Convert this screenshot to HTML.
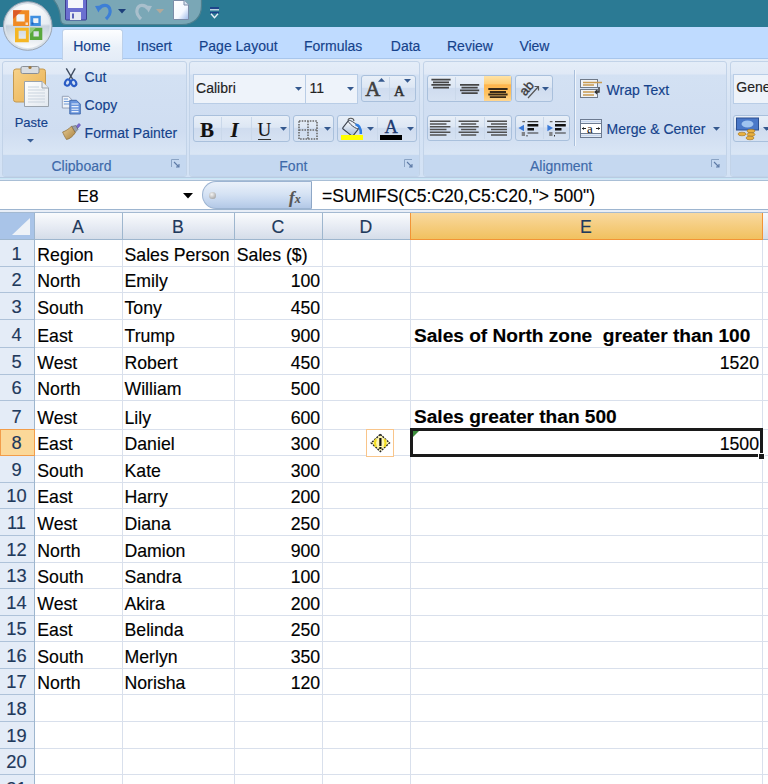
<!DOCTYPE html><html><head><meta charset="utf-8"><style>
html,body{margin:0;padding:0;width:768px;height:784px;overflow:hidden;background:#fff;position:relative;font-family:"Liberation Sans",sans-serif;}
.t{position:absolute;white-space:nowrap;-webkit-text-stroke:0.15px currentColor;}
svg{position:absolute;overflow:visible}
</style></head><body>
<div style="position:absolute;left:34px;top:266px;width:734px;height:1px;background:#d9e0ec"></div>
<div style="position:absolute;left:34px;top:292px;width:734px;height:1px;background:#d9e0ec"></div>
<div style="position:absolute;left:34px;top:319px;width:734px;height:1px;background:#d9e0ec"></div>
<div style="position:absolute;left:34px;top:347px;width:734px;height:1px;background:#d9e0ec"></div>
<div style="position:absolute;left:34px;top:374px;width:734px;height:1px;background:#d9e0ec"></div>
<div style="position:absolute;left:34px;top:400px;width:734px;height:1px;background:#d9e0ec"></div>
<div style="position:absolute;left:34px;top:429px;width:734px;height:1px;background:#d9e0ec"></div>
<div style="position:absolute;left:34px;top:455px;width:734px;height:1px;background:#d9e0ec"></div>
<div style="position:absolute;left:34px;top:482px;width:734px;height:1px;background:#d9e0ec"></div>
<div style="position:absolute;left:34px;top:508px;width:734px;height:1px;background:#d9e0ec"></div>
<div style="position:absolute;left:34px;top:535px;width:734px;height:1px;background:#d9e0ec"></div>
<div style="position:absolute;left:34px;top:562px;width:734px;height:1px;background:#d9e0ec"></div>
<div style="position:absolute;left:34px;top:588px;width:734px;height:1px;background:#d9e0ec"></div>
<div style="position:absolute;left:34px;top:615px;width:734px;height:1px;background:#d9e0ec"></div>
<div style="position:absolute;left:34px;top:641px;width:734px;height:1px;background:#d9e0ec"></div>
<div style="position:absolute;left:34px;top:668px;width:734px;height:1px;background:#d9e0ec"></div>
<div style="position:absolute;left:34px;top:694px;width:734px;height:1px;background:#d9e0ec"></div>
<div style="position:absolute;left:34px;top:721px;width:734px;height:1px;background:#d9e0ec"></div>
<div style="position:absolute;left:34px;top:748px;width:734px;height:1px;background:#d9e0ec"></div>
<div style="position:absolute;left:34px;top:774px;width:734px;height:1px;background:#d9e0ec"></div>
<div style="position:absolute;left:34px;top:801px;width:734px;height:1px;background:#d9e0ec"></div>
<div style="position:absolute;left:122px;top:239px;width:1px;height:545px;background:#d9e0ec"></div>
<div style="position:absolute;left:234px;top:239px;width:1px;height:545px;background:#d9e0ec"></div>
<div style="position:absolute;left:322px;top:239px;width:1px;height:545px;background:#d9e0ec"></div>
<div style="position:absolute;left:410px;top:239px;width:1px;height:545px;background:#d9e0ec"></div>
<div style="position:absolute;left:762px;top:239px;width:1px;height:545px;background:#d9e0ec"></div>
<div style="position:absolute;left:0px;top:239px;width:34px;height:545px;background:#e4ecf7"></div>
<div style="position:absolute;left:0px;top:266px;width:34px;height:1px;background:#aec2d9"></div>
<div style="position:absolute;left:0px;top:292px;width:34px;height:1px;background:#aec2d9"></div>
<div style="position:absolute;left:0px;top:319px;width:34px;height:1px;background:#aec2d9"></div>
<div style="position:absolute;left:0px;top:347px;width:34px;height:1px;background:#aec2d9"></div>
<div style="position:absolute;left:0px;top:374px;width:34px;height:1px;background:#aec2d9"></div>
<div style="position:absolute;left:0px;top:400px;width:34px;height:1px;background:#aec2d9"></div>
<div style="position:absolute;left:0px;top:429px;width:34px;height:1px;background:#aec2d9"></div>
<div style="position:absolute;left:0px;top:455px;width:34px;height:1px;background:#aec2d9"></div>
<div style="position:absolute;left:0px;top:482px;width:34px;height:1px;background:#aec2d9"></div>
<div style="position:absolute;left:0px;top:508px;width:34px;height:1px;background:#aec2d9"></div>
<div style="position:absolute;left:0px;top:535px;width:34px;height:1px;background:#aec2d9"></div>
<div style="position:absolute;left:0px;top:562px;width:34px;height:1px;background:#aec2d9"></div>
<div style="position:absolute;left:0px;top:588px;width:34px;height:1px;background:#aec2d9"></div>
<div style="position:absolute;left:0px;top:615px;width:34px;height:1px;background:#aec2d9"></div>
<div style="position:absolute;left:0px;top:641px;width:34px;height:1px;background:#aec2d9"></div>
<div style="position:absolute;left:0px;top:668px;width:34px;height:1px;background:#aec2d9"></div>
<div style="position:absolute;left:0px;top:694px;width:34px;height:1px;background:#aec2d9"></div>
<div style="position:absolute;left:0px;top:721px;width:34px;height:1px;background:#aec2d9"></div>
<div style="position:absolute;left:0px;top:748px;width:34px;height:1px;background:#aec2d9"></div>
<div style="position:absolute;left:0px;top:774px;width:34px;height:1px;background:#aec2d9"></div>
<div style="position:absolute;left:0px;top:801px;width:34px;height:1px;background:#aec2d9"></div>
<div style="position:absolute;left:34px;top:239px;width:1px;height:545px;background:#9eb6ce"></div>
<div style="position:absolute;left:0px;top:429px;width:35px;height:27px;background:#fbd899;box-sizing:border-box;border:1px solid #f29d4a;"></div>
<div style="position:absolute;left:0px;top:213px;width:768px;height:26px;background:linear-gradient(#f9fbfd,#e4e9f2 60%,#d5dde9);"></div>
<div style="position:absolute;left:0px;top:212px;width:768px;height:1px;background:#9eb6ce"></div>
<div style="position:absolute;left:0px;top:239px;width:768px;height:1px;background:#9eb6ce"></div>
<div style="position:absolute;left:34px;top:213px;width:1px;height:26px;background:#9eb6ce"></div>
<div style="position:absolute;left:122px;top:213px;width:1px;height:26px;background:#9eb6ce"></div>
<div style="position:absolute;left:234px;top:213px;width:1px;height:26px;background:#9eb6ce"></div>
<div style="position:absolute;left:322px;top:213px;width:1px;height:26px;background:#9eb6ce"></div>
<div style="position:absolute;left:410px;top:213px;width:1px;height:26px;background:#9eb6ce"></div>
<div style="position:absolute;left:762px;top:213px;width:1px;height:26px;background:#9eb6ce"></div>
<div style="position:absolute;left:0px;top:213px;width:34px;height:26px;background:#a9c4e8"></div>
<svg style="left:0;top:213px" width="34" height="26"><polygon points="12,22 30,22 30,5" fill="#eef2f7"/></svg>
<div style="position:absolute;left:410px;top:213px;width:353px;height:27px;box-sizing:border-box;background:linear-gradient(#f9d99f,#f1c15f);border:1px solid #f29436;border-top:none;"></div>
<div class="t" style="left:48.0px;width:60px;text-align:center;top:215.77px;line-height:22px;font-size:17.7px;font-weight:normal;color:#1f3a5c;font-family:'Liberation Sans', sans-serif;">A</div>
<div class="t" style="left:148.0px;width:60px;text-align:center;top:215.77px;line-height:22px;font-size:17.7px;font-weight:normal;color:#1f3a5c;font-family:'Liberation Sans', sans-serif;">B</div>
<div class="t" style="left:248.0px;width:60px;text-align:center;top:215.77px;line-height:22px;font-size:17.7px;font-weight:normal;color:#1f3a5c;font-family:'Liberation Sans', sans-serif;">C</div>
<div class="t" style="left:336.0px;width:60px;text-align:center;top:215.77px;line-height:22px;font-size:17.7px;font-weight:normal;color:#1f3a5c;font-family:'Liberation Sans', sans-serif;">D</div>
<div class="t" style="left:556.0px;width:60px;text-align:center;top:215.77px;line-height:22px;font-size:17.7px;font-weight:normal;color:#1f3a5c;font-family:'Liberation Sans', sans-serif;">E</div>
<div class="t" style="left:-0.5px;width:34px;text-align:center;top:241.86px;line-height:23px;font-size:18.3px;font-weight:normal;color:#1f3a5c;font-family:'Liberation Sans', sans-serif;">1</div>
<div class="t" style="left:-0.5px;width:34px;text-align:center;top:267.86px;line-height:23px;font-size:18.3px;font-weight:normal;color:#1f3a5c;font-family:'Liberation Sans', sans-serif;">2</div>
<div class="t" style="left:-0.5px;width:34px;text-align:center;top:294.86px;line-height:23px;font-size:18.3px;font-weight:normal;color:#1f3a5c;font-family:'Liberation Sans', sans-serif;">3</div>
<div class="t" style="left:-0.5px;width:34px;text-align:center;top:322.86px;line-height:23px;font-size:18.3px;font-weight:normal;color:#1f3a5c;font-family:'Liberation Sans', sans-serif;">4</div>
<div class="t" style="left:-0.5px;width:34px;text-align:center;top:349.86px;line-height:23px;font-size:18.3px;font-weight:normal;color:#1f3a5c;font-family:'Liberation Sans', sans-serif;">5</div>
<div class="t" style="left:-0.5px;width:34px;text-align:center;top:375.86px;line-height:23px;font-size:18.3px;font-weight:normal;color:#1f3a5c;font-family:'Liberation Sans', sans-serif;">6</div>
<div class="t" style="left:-0.5px;width:34px;text-align:center;top:404.86px;line-height:23px;font-size:18.3px;font-weight:normal;color:#1f3a5c;font-family:'Liberation Sans', sans-serif;">7</div>
<div class="t" style="left:-0.5px;width:34px;text-align:center;top:430.86px;line-height:23px;font-size:18.3px;font-weight:normal;color:#1f3a5c;font-family:'Liberation Sans', sans-serif;">8</div>
<div class="t" style="left:-0.5px;width:34px;text-align:center;top:457.86px;line-height:23px;font-size:18.3px;font-weight:normal;color:#1f3a5c;font-family:'Liberation Sans', sans-serif;">9</div>
<div class="t" style="left:-0.5px;width:34px;text-align:center;top:483.86px;line-height:23px;font-size:18.3px;font-weight:normal;color:#1f3a5c;font-family:'Liberation Sans', sans-serif;">10</div>
<div class="t" style="left:-0.5px;width:34px;text-align:center;top:510.86px;line-height:23px;font-size:18.3px;font-weight:normal;color:#1f3a5c;font-family:'Liberation Sans', sans-serif;">11</div>
<div class="t" style="left:-0.5px;width:34px;text-align:center;top:537.86px;line-height:23px;font-size:18.3px;font-weight:normal;color:#1f3a5c;font-family:'Liberation Sans', sans-serif;">12</div>
<div class="t" style="left:-0.5px;width:34px;text-align:center;top:563.86px;line-height:23px;font-size:18.3px;font-weight:normal;color:#1f3a5c;font-family:'Liberation Sans', sans-serif;">13</div>
<div class="t" style="left:-0.5px;width:34px;text-align:center;top:590.86px;line-height:23px;font-size:18.3px;font-weight:normal;color:#1f3a5c;font-family:'Liberation Sans', sans-serif;">14</div>
<div class="t" style="left:-0.5px;width:34px;text-align:center;top:616.86px;line-height:23px;font-size:18.3px;font-weight:normal;color:#1f3a5c;font-family:'Liberation Sans', sans-serif;">15</div>
<div class="t" style="left:-0.5px;width:34px;text-align:center;top:643.86px;line-height:23px;font-size:18.3px;font-weight:normal;color:#1f3a5c;font-family:'Liberation Sans', sans-serif;">16</div>
<div class="t" style="left:-0.5px;width:34px;text-align:center;top:669.86px;line-height:23px;font-size:18.3px;font-weight:normal;color:#1f3a5c;font-family:'Liberation Sans', sans-serif;">17</div>
<div class="t" style="left:-0.5px;width:34px;text-align:center;top:696.86px;line-height:23px;font-size:18.3px;font-weight:normal;color:#1f3a5c;font-family:'Liberation Sans', sans-serif;">18</div>
<div class="t" style="left:-0.5px;width:34px;text-align:center;top:723.86px;line-height:23px;font-size:18.3px;font-weight:normal;color:#1f3a5c;font-family:'Liberation Sans', sans-serif;">19</div>
<div class="t" style="left:-0.5px;width:34px;text-align:center;top:749.86px;line-height:23px;font-size:18.3px;font-weight:normal;color:#1f3a5c;font-family:'Liberation Sans', sans-serif;">20</div>
<div class="t" style="left:-0.5px;width:34px;text-align:center;top:776.86px;line-height:23px;font-size:18.3px;font-weight:normal;color:#1f3a5c;font-family:'Liberation Sans', sans-serif;">21</div>
<div class="t" style="left:37.3px;top:243.87px;line-height:22px;font-size:17.7px;font-weight:normal;color:#000;font-family:'Liberation Sans', sans-serif;">Region</div>
<div class="t" style="left:124.5px;top:243.87px;line-height:22px;font-size:17.7px;font-weight:normal;color:#000;font-family:'Liberation Sans', sans-serif;">Sales Person</div>
<div class="t" style="left:236.8px;top:243.87px;line-height:22px;font-size:17.7px;font-weight:normal;color:#000;font-family:'Liberation Sans', sans-serif;">Sales ($)</div>
<div class="t" style="left:37.3px;top:269.87px;line-height:22px;font-size:17.7px;font-weight:normal;color:#000;font-family:'Liberation Sans', sans-serif;">North</div>
<div class="t" style="left:124.5px;top:269.87px;line-height:22px;font-size:17.7px;font-weight:normal;color:#000;font-family:'Liberation Sans', sans-serif;">Emily</div>
<div class="t" style="right:447.8px;top:269.87px;line-height:22px;font-size:17.7px;font-weight:normal;color:#000;font-family:'Liberation Sans', sans-serif;">100</div>
<div class="t" style="left:37.3px;top:296.87px;line-height:22px;font-size:17.7px;font-weight:normal;color:#000;font-family:'Liberation Sans', sans-serif;">South</div>
<div class="t" style="left:124.5px;top:296.87px;line-height:22px;font-size:17.7px;font-weight:normal;color:#000;font-family:'Liberation Sans', sans-serif;">Tony</div>
<div class="t" style="right:447.8px;top:296.87px;line-height:22px;font-size:17.7px;font-weight:normal;color:#000;font-family:'Liberation Sans', sans-serif;">450</div>
<div class="t" style="left:37.3px;top:324.87px;line-height:22px;font-size:17.7px;font-weight:normal;color:#000;font-family:'Liberation Sans', sans-serif;">East</div>
<div class="t" style="left:124.5px;top:324.87px;line-height:22px;font-size:17.7px;font-weight:normal;color:#000;font-family:'Liberation Sans', sans-serif;">Trump</div>
<div class="t" style="right:447.8px;top:324.87px;line-height:22px;font-size:17.7px;font-weight:normal;color:#000;font-family:'Liberation Sans', sans-serif;">900</div>
<div class="t" style="left:37.3px;top:351.87px;line-height:22px;font-size:17.7px;font-weight:normal;color:#000;font-family:'Liberation Sans', sans-serif;">West</div>
<div class="t" style="left:124.5px;top:351.87px;line-height:22px;font-size:17.7px;font-weight:normal;color:#000;font-family:'Liberation Sans', sans-serif;">Robert</div>
<div class="t" style="right:447.8px;top:351.87px;line-height:22px;font-size:17.7px;font-weight:normal;color:#000;font-family:'Liberation Sans', sans-serif;">450</div>
<div class="t" style="left:37.3px;top:377.87px;line-height:22px;font-size:17.7px;font-weight:normal;color:#000;font-family:'Liberation Sans', sans-serif;">North</div>
<div class="t" style="left:124.5px;top:377.87px;line-height:22px;font-size:17.7px;font-weight:normal;color:#000;font-family:'Liberation Sans', sans-serif;">William</div>
<div class="t" style="right:447.8px;top:377.87px;line-height:22px;font-size:17.7px;font-weight:normal;color:#000;font-family:'Liberation Sans', sans-serif;">500</div>
<div class="t" style="left:37.3px;top:406.87px;line-height:22px;font-size:17.7px;font-weight:normal;color:#000;font-family:'Liberation Sans', sans-serif;">West</div>
<div class="t" style="left:124.5px;top:406.87px;line-height:22px;font-size:17.7px;font-weight:normal;color:#000;font-family:'Liberation Sans', sans-serif;">Lily</div>
<div class="t" style="right:447.8px;top:406.87px;line-height:22px;font-size:17.7px;font-weight:normal;color:#000;font-family:'Liberation Sans', sans-serif;">600</div>
<div class="t" style="left:37.3px;top:432.87px;line-height:22px;font-size:17.7px;font-weight:normal;color:#000;font-family:'Liberation Sans', sans-serif;">East</div>
<div class="t" style="left:124.5px;top:432.87px;line-height:22px;font-size:17.7px;font-weight:normal;color:#000;font-family:'Liberation Sans', sans-serif;">Daniel</div>
<div class="t" style="right:447.8px;top:432.87px;line-height:22px;font-size:17.7px;font-weight:normal;color:#000;font-family:'Liberation Sans', sans-serif;">300</div>
<div class="t" style="left:37.3px;top:459.87px;line-height:22px;font-size:17.7px;font-weight:normal;color:#000;font-family:'Liberation Sans', sans-serif;">South</div>
<div class="t" style="left:124.5px;top:459.87px;line-height:22px;font-size:17.7px;font-weight:normal;color:#000;font-family:'Liberation Sans', sans-serif;">Kate</div>
<div class="t" style="right:447.8px;top:459.87px;line-height:22px;font-size:17.7px;font-weight:normal;color:#000;font-family:'Liberation Sans', sans-serif;">300</div>
<div class="t" style="left:37.3px;top:485.87px;line-height:22px;font-size:17.7px;font-weight:normal;color:#000;font-family:'Liberation Sans', sans-serif;">East</div>
<div class="t" style="left:124.5px;top:485.87px;line-height:22px;font-size:17.7px;font-weight:normal;color:#000;font-family:'Liberation Sans', sans-serif;">Harry</div>
<div class="t" style="right:447.8px;top:485.87px;line-height:22px;font-size:17.7px;font-weight:normal;color:#000;font-family:'Liberation Sans', sans-serif;">200</div>
<div class="t" style="left:37.3px;top:512.87px;line-height:22px;font-size:17.7px;font-weight:normal;color:#000;font-family:'Liberation Sans', sans-serif;">West</div>
<div class="t" style="left:124.5px;top:512.87px;line-height:22px;font-size:17.7px;font-weight:normal;color:#000;font-family:'Liberation Sans', sans-serif;">Diana</div>
<div class="t" style="right:447.8px;top:512.87px;line-height:22px;font-size:17.7px;font-weight:normal;color:#000;font-family:'Liberation Sans', sans-serif;">250</div>
<div class="t" style="left:37.3px;top:539.87px;line-height:22px;font-size:17.7px;font-weight:normal;color:#000;font-family:'Liberation Sans', sans-serif;">North</div>
<div class="t" style="left:124.5px;top:539.87px;line-height:22px;font-size:17.7px;font-weight:normal;color:#000;font-family:'Liberation Sans', sans-serif;">Damion</div>
<div class="t" style="right:447.8px;top:539.87px;line-height:22px;font-size:17.7px;font-weight:normal;color:#000;font-family:'Liberation Sans', sans-serif;">900</div>
<div class="t" style="left:37.3px;top:565.87px;line-height:22px;font-size:17.7px;font-weight:normal;color:#000;font-family:'Liberation Sans', sans-serif;">South</div>
<div class="t" style="left:124.5px;top:565.87px;line-height:22px;font-size:17.7px;font-weight:normal;color:#000;font-family:'Liberation Sans', sans-serif;">Sandra</div>
<div class="t" style="right:447.8px;top:565.87px;line-height:22px;font-size:17.7px;font-weight:normal;color:#000;font-family:'Liberation Sans', sans-serif;">100</div>
<div class="t" style="left:37.3px;top:592.87px;line-height:22px;font-size:17.7px;font-weight:normal;color:#000;font-family:'Liberation Sans', sans-serif;">West</div>
<div class="t" style="left:124.5px;top:592.87px;line-height:22px;font-size:17.7px;font-weight:normal;color:#000;font-family:'Liberation Sans', sans-serif;">Akira</div>
<div class="t" style="right:447.8px;top:592.87px;line-height:22px;font-size:17.7px;font-weight:normal;color:#000;font-family:'Liberation Sans', sans-serif;">200</div>
<div class="t" style="left:37.3px;top:618.87px;line-height:22px;font-size:17.7px;font-weight:normal;color:#000;font-family:'Liberation Sans', sans-serif;">East</div>
<div class="t" style="left:124.5px;top:618.87px;line-height:22px;font-size:17.7px;font-weight:normal;color:#000;font-family:'Liberation Sans', sans-serif;">Belinda</div>
<div class="t" style="right:447.8px;top:618.87px;line-height:22px;font-size:17.7px;font-weight:normal;color:#000;font-family:'Liberation Sans', sans-serif;">250</div>
<div class="t" style="left:37.3px;top:645.87px;line-height:22px;font-size:17.7px;font-weight:normal;color:#000;font-family:'Liberation Sans', sans-serif;">South</div>
<div class="t" style="left:124.5px;top:645.87px;line-height:22px;font-size:17.7px;font-weight:normal;color:#000;font-family:'Liberation Sans', sans-serif;">Merlyn</div>
<div class="t" style="right:447.8px;top:645.87px;line-height:22px;font-size:17.7px;font-weight:normal;color:#000;font-family:'Liberation Sans', sans-serif;">350</div>
<div class="t" style="left:37.3px;top:671.87px;line-height:22px;font-size:17.7px;font-weight:normal;color:#000;font-family:'Liberation Sans', sans-serif;">North</div>
<div class="t" style="left:124.5px;top:671.87px;line-height:22px;font-size:17.7px;font-weight:normal;color:#000;font-family:'Liberation Sans', sans-serif;">Norisha</div>
<div class="t" style="right:447.8px;top:671.87px;line-height:22px;font-size:17.7px;font-weight:normal;color:#000;font-family:'Liberation Sans', sans-serif;">120</div>
<div class="t" style="left:414px;top:323.78px;line-height:24px;font-size:19.1px;font-weight:bold;color:#000;font-family:'Liberation Sans', sans-serif;">Sales of North zone&nbsp; greater than 100</div>
<div class="t" style="right:9px;top:351.67px;line-height:22px;font-size:17.7px;font-weight:normal;color:#000;font-family:'Liberation Sans', sans-serif;">1520</div>
<div class="t" style="left:414px;top:405.38px;line-height:24px;font-size:19.1px;font-weight:bold;color:#000;font-family:'Liberation Sans', sans-serif;">Sales greater than 500</div>
<div class="t" style="right:9px;top:432.67px;line-height:22px;font-size:17.7px;font-weight:normal;color:#000;font-family:'Liberation Sans', sans-serif;">1500</div>
<div style="position:absolute;left:410px;top:428px;width:353px;height:29px;box-sizing:border-box;border:3px solid #1a1a1a;"></div>
<div style="position:absolute;left:759px;top:454px;width:5px;height:5px;background:#1a1a1a;border:1px solid #fff;box-sizing:content-box;margin:-1px"></div>
<svg style="left:413px;top:431px" width="8" height="8"><polygon points="0,0 6,0 0,6" fill="#3c8c3c"/></svg>
<div style="position:absolute;left:366px;top:429px;width:28px;height:28px;box-sizing:border-box;border:1px solid #f9c58a;background:#fff"></div>
<svg style="left:370px;top:433px" width="21" height="20" viewBox="0 0 21 20"><polygon points="10.3,1.3 19.5,9.9 10.3,18.5 1.2,9.9" fill="#fff7b0" stroke="#222" stroke-width="1.4" stroke-dasharray="2,1"/><path d="M6,6 Q4,10 6,14 M14.5,6 Q16.5,10 14.5,14" fill="none" stroke="#f2dc20" stroke-width="2"/><rect x="9.3" y="5" width="2.2" height="8" fill="#111"/><rect x="9.3" y="14" width="2.2" height="2" fill="#111"/></svg>
<div style="position:absolute;left:0px;top:177px;width:768px;height:35px;background:#d5e4f6"></div>
<div style="position:absolute;left:0px;top:178px;width:768px;height:1px;background:#c8e6f5"></div>
<div style="position:absolute;left:0px;top:180px;width:768px;height:1px;background:#a9bfd6"></div>
<div style="position:absolute;left:0px;top:181px;width:768px;height:28px;background:#fff"></div>
<div style="position:absolute;left:0px;top:209px;width:768px;height:1px;background:#9db5d0"></div>
<div style="position:absolute;left:0px;top:210px;width:768px;height:2px;background:#e8eef7"></div>
<div style="position:absolute;left:0px;top:212px;width:768px;height:1px;background:#a3b9d1"></div>
<div class="t" style="left:58.0px;width:60px;text-align:center;top:185.04px;line-height:22px;font-size:17.2px;font-weight:normal;color:#000;font-family:'Liberation Sans', sans-serif;">E8</div>
<svg style="left:183px;top:193px" width="11" height="6"><polygon points="0,0 10,0 5,5.5" fill="#000"/></svg>
<div style="position:absolute;left:202px;top:181px;width:110px;height:28px;box-sizing:border-box;border:1px solid #9cb4d2;border-right:1px solid #8ea7c6;border-radius:14px 0 0 14px;background:linear-gradient(#eaf1fa,#d6e3f4 45%,#c3d5ee 75%,#b3c8e6);"></div>
<div style="position:absolute;left:209px;top:192px;width:7px;height:7px;border-radius:50%;background:radial-gradient(circle at 40% 35%,#f4f4f4,#b8b8b8 60%,#8c8c8c);"></div>
<div class="t" style="left:289px;top:186.61px;line-height:21px;font-size:17px;font-weight:normal;color:#555;font-family:'Liberation Serif', serif;font-style:italic;font-weight:bold;"><i>f</i><span style="font-size:12px">x</span></div>
<div class="t" style="left:322px;top:184.94px;line-height:22px;font-size:17.5px;font-weight:normal;color:#000;font-family:'Liberation Sans', sans-serif;">=SUMIFS(C5:C20,C5:C20,"&gt; 500")</div>
<div style="position:absolute;left:0px;top:0px;width:768px;height:27px;background:#2b7a94"></div>
<svg style="left:0;top:0" width="230" height="27"><path d="M53,-1 C57,4 60.5,10 60.5,19 Q60.5,24.5 66,24.5 H182 C194,24.5 201.5,17 201.5,6 V-1 Z" fill="#7aa7b6" stroke="#50808f" stroke-width="1.2"/></svg>
<div style="position:absolute;left:0px;top:27px;width:768px;height:32px;background:#bfdbff"></div>
<div style="position:absolute;left:0px;top:58px;width:768px;height:1px;background:#a8c6ec"></div>
<div style="position:absolute;left:0px;top:59px;width:768px;height:119px;background:linear-gradient(#e3ecf7,#d6e3f4 40%,#d3e2f5)"></div>
<div style="position:absolute;left:0px;top:177px;width:768px;height:1px;background:#b7cbe3"></div>
<div style="position:absolute;left:62px;top:29px;width:61px;height:31px;box-sizing:border-box;border:1px solid #bcd0ea;border-bottom:none;border-radius:3px 3px 0 0;background:linear-gradient(#fdfeff,#e9f0f9 60%,#e4ecf7);"></div>
<div class="t" style="left:73.2px;top:36.95px;line-height:18px;font-size:14px;font-weight:normal;color:#15428b;font-family:'Liberation Sans', sans-serif;">Home</div>
<div class="t" style="left:137px;top:36.95px;line-height:18px;font-size:14px;font-weight:normal;color:#15428b;font-family:'Liberation Sans', sans-serif;">Insert</div>
<div class="t" style="left:199px;top:36.95px;line-height:18px;font-size:14px;font-weight:normal;color:#15428b;font-family:'Liberation Sans', sans-serif;">Page Layout</div>
<div class="t" style="left:304px;top:36.95px;line-height:18px;font-size:14px;font-weight:normal;color:#15428b;font-family:'Liberation Sans', sans-serif;">Formulas</div>
<div class="t" style="left:390.8px;top:36.95px;line-height:18px;font-size:14px;font-weight:normal;color:#15428b;font-family:'Liberation Sans', sans-serif;">Data</div>
<div class="t" style="left:447px;top:36.95px;line-height:18px;font-size:14px;font-weight:normal;color:#15428b;font-family:'Liberation Sans', sans-serif;">Review</div>
<div class="t" style="left:519.4px;top:36.95px;line-height:18px;font-size:14px;font-weight:normal;color:#15428b;font-family:'Liberation Sans', sans-serif;">View</div>
<div style="position:absolute;left:2px;top:61px;width:185px;height:116px;box-sizing:border-box;border:1px solid #c2d3e8;border-radius:3px;background:linear-gradient(#e4edf8 0,#e0e9f6 12px,#d3e1f3 13px,#cfddf1 70px,#dae6f5 93px);overflow:hidden"><div style="position:absolute;left:0;right:0;top:92px;bottom:0;background:#c5d8f0;border-top:1px solid #d6e3f3"></div></div>
<div class="t" style="left:51.5px;top:156.95px;line-height:18px;font-size:14px;font-weight:normal;color:#3e6aaa;font-family:'Liberation Sans', sans-serif;">Clipboard</div>
<svg style="left:171px;top:159px" width="10" height="10"><path d="M0.5,8 V0.5 H8" fill="none" stroke="#8aa3c4" stroke-width="1"/><path d="M3,3 L8,8 M5,8 H8 V5" fill="none" stroke="#5d7aa6" stroke-width="1.1"/></svg>
<div style="position:absolute;left:189px;top:61px;width:231px;height:116px;box-sizing:border-box;border:1px solid #c2d3e8;border-radius:3px;background:linear-gradient(#e4edf8 0,#e0e9f6 12px,#d3e1f3 13px,#cfddf1 70px,#dae6f5 93px);overflow:hidden"><div style="position:absolute;left:0;right:0;top:92px;bottom:0;background:#c5d8f0;border-top:1px solid #d6e3f3"></div></div>
<div class="t" style="left:279.3px;top:156.95px;line-height:18px;font-size:14px;font-weight:normal;color:#3e6aaa;font-family:'Liberation Sans', sans-serif;">Font</div>
<svg style="left:404px;top:159px" width="10" height="10"><path d="M0.5,8 V0.5 H8" fill="none" stroke="#8aa3c4" stroke-width="1"/><path d="M3,3 L8,8 M5,8 H8 V5" fill="none" stroke="#5d7aa6" stroke-width="1.1"/></svg>
<div style="position:absolute;left:423px;top:61px;width:304px;height:116px;box-sizing:border-box;border:1px solid #c2d3e8;border-radius:3px;background:linear-gradient(#e4edf8 0,#e0e9f6 12px,#d3e1f3 13px,#cfddf1 70px,#dae6f5 93px);overflow:hidden"><div style="position:absolute;left:0;right:0;top:92px;bottom:0;background:#c5d8f0;border-top:1px solid #d6e3f3"></div></div>
<div class="t" style="left:530px;top:156.95px;line-height:18px;font-size:14px;font-weight:normal;color:#3e6aaa;font-family:'Liberation Sans', sans-serif;">Alignment</div>
<svg style="left:711px;top:159px" width="10" height="10"><path d="M0.5,8 V0.5 H8" fill="none" stroke="#8aa3c4" stroke-width="1"/><path d="M3,3 L8,8 M5,8 H8 V5" fill="none" stroke="#5d7aa6" stroke-width="1.1"/></svg>
<div style="position:absolute;left:730px;top:61px;width:70px;height:116px;box-sizing:border-box;border:1px solid #c2d3e8;border-radius:3px;background:linear-gradient(#e4edf8 0,#e0e9f6 12px,#d3e1f3 13px,#cfddf1 70px,#dae6f5 93px);overflow:hidden"><div style="position:absolute;left:0;right:0;top:92px;bottom:0;background:#c5d8f0;border-top:1px solid #d6e3f3"></div></div>
<svg style="left:12px;top:65px" width="40" height="44" viewBox="0 0 40 44">
<defs><linearGradient id="cb" x1="0" y1="0" x2="1" y2="1"><stop offset="0" stop-color="#f7d28a"/><stop offset="1" stop-color="#e9b050"/></linearGradient>
<linearGradient id="pp" x1="0" y1="0" x2="1" y2="1"><stop offset="0" stop-color="#ffffff"/><stop offset="1" stop-color="#e2e8ef"/></linearGradient></defs>
<rect x="1.5" y="4" width="32" height="33" rx="2.5" fill="url(#cb)" stroke="#c49a52" stroke-width="1"/>
<rect x="9" y="1.5" width="18" height="7" rx="1.5" fill="#d9dde2" stroke="#8a8f96" stroke-width="1"/>
<circle cx="18" cy="2.5" r="1.6" fill="#a07a40"/>
<path d="M12.5,16.5 H30 L36.5,23 V41.5 H12.5 Z" fill="url(#pp)" stroke="#9aa3ad" stroke-width="1"/>
<path d="M30,16.5 V23 H36.5" fill="#e8ecf0" stroke="#9aa3ad" stroke-width="1"/>
<path d="M16,22 H27 M16,25 H33 M16,28 H33 M16,31 H33 M16,34 H33 M16,37 H33" stroke="#c9d3de" stroke-width="1"/>
</svg>
<div class="t" style="left:14.7px;top:115.20px;line-height:16px;font-size:13px;font-weight:normal;color:#15428b;font-family:'Liberation Sans', sans-serif;">Paste</div>
<svg style="left:27px;top:139px" width="8" height="5"><polygon points="0,0 7,0 3.5,3.6" fill="#3a5f96"/></svg>
<svg style="left:0;top:0" width="100" height="150">
<path d="M66.3,68.3 L72.8,79.5 M75.2,68.3 L69,79.5" stroke="#3f4c60" stroke-width="1.4" fill="none"/>
<ellipse cx="67.6" cy="82.6" rx="2.5" ry="3.2" transform="rotate(28 67.6 82.6)" fill="none" stroke="#2a5cc4" stroke-width="2.1"/>
<ellipse cx="73.6" cy="82.9" rx="2.5" ry="3.2" transform="rotate(-28 73.6 82.9)" fill="none" stroke="#2a5cc4" stroke-width="2.1"/>
</svg>
<div class="t" style="left:84.6px;top:68.45px;line-height:18px;font-size:14px;font-weight:normal;color:#15428b;font-family:'Liberation Sans', sans-serif;">Cut</div>
<svg style="left:0;top:0" width="100" height="150">
<path d="M62.3,96.3 H68.5 L71.5,99.3 V108 H62.3 Z" fill="#eef2f8" stroke="#8d9ab0" stroke-width="0.9"/>
<path d="M63.8,99 H68 M63.8,101.5 H69.5 M63.8,104 H69.5" stroke="#6f9ad6" stroke-width="1"/>
<path d="M69.8,100.3 H76.5 L80.3,104.1 V114 H69.8 Z" fill="#6b96de" stroke="#3c64a8" stroke-width="0.9"/>
<path d="M71.5,104 H78.5 M71.5,106.6 H78.5 M71.5,109.2 H78.5 M71.5,111.6 H78.5" stroke="#eaf1fb" stroke-width="1.1"/>
</svg>
<div class="t" style="left:84.6px;top:95.65px;line-height:18px;font-size:14px;font-weight:normal;color:#15428b;font-family:'Liberation Sans', sans-serif;">Copy</div>
<svg style="left:0;top:0" width="100" height="150">
<defs><linearGradient id="br" x1="0" y1="0" x2="1" y2="1"><stop offset="0" stop-color="#e9cf98"/><stop offset="1" stop-color="#a9803e"/></linearGradient></defs>
<path d="M75,127.5 L79,123.5 L80.5,125 L77,129 Z" fill="#7c6ad8" stroke="#4c3fa0" stroke-width="0.6"/>
<path d="M71.5,126.5 L75.8,125.5 L78,129.3 L75,132.5 Z" fill="#9aa0a8" stroke="#5a5f66" stroke-width="0.6"/>
<path d="M71.5,126.3 L75.3,132.7 C73,136 70,139 66.5,139.5 C64.5,136.5 63.5,134 62.6,132 C66,131 68.5,129 71.5,126.3 Z" fill="url(#br)" stroke="#8a6a34" stroke-width="0.7"/>
</svg>
<div class="t" style="left:84.6px;top:123.55px;line-height:18px;font-size:14px;font-weight:normal;color:#15428b;font-family:'Liberation Sans', sans-serif;">Format Painter</div>
<div style="position:absolute;left:193px;top:74px;width:113px;height:30px;box-sizing:border-box;border:1px solid #b9cde6;background:#eef3fa"></div>
<div style="position:absolute;left:305px;top:74px;width:53px;height:30px;box-sizing:border-box;border:1px solid #b9cde6;background:#eef3fa"></div>
<div class="t" style="left:196.1px;top:78.85px;line-height:18px;font-size:14px;font-weight:normal;color:#222;font-family:'Liberation Sans', sans-serif;">Calibri</div>
<div class="t" style="left:309.5px;top:78.65px;line-height:18px;font-size:14px;font-weight:normal;color:#222;font-family:'Liberation Sans', sans-serif;">11</div>
<svg style="left:294.5px;top:87px" width="8" height="5"><polygon points="0,0 7,0 3.5,3.8" fill="#34588e"/></svg>
<svg style="left:346.5px;top:87px" width="8" height="5"><polygon points="0,0 7,0 3.5,3.8" fill="#34588e"/></svg>
<div style="position:absolute;left:361px;top:74.5px;width:55px;height:27.0px;box-sizing:border-box;border:1px solid #a9c0dc;border-radius:3px;background:linear-gradient(#e8eff8,#dde7f4 45%,#cfdcef 50%,#d6e2f2);"></div>
<div style="position:absolute;left:388.5px;top:76.5px;width:1px;height:23.0px;background:#cad8ea"></div>
<div class="t" style="left:365.2px;top:75.72px;line-height:26px;font-size:21px;font-weight:normal;color:#3f3f3f;font-family:'Liberation Serif', serif;-webkit-text-stroke:0.6px #3f3f3f;">A</div>
<svg style="left:377.5px;top:78px" width="8" height="5"><polygon points="0,3.8 7,3.8 3.5,0" fill="#34588e"/></svg>
<div class="t" style="left:394px;top:81.58px;line-height:18px;font-size:14.5px;font-weight:normal;color:#2f2f2f;font-family:'Liberation Serif', serif;-webkit-text-stroke:0.5px #2f2f2f;">A</div>
<svg style="left:404px;top:79px" width="8" height="5"><polygon points="0,0 7,0 3.5,3.8" fill="#34588e"/></svg>
<div style="position:absolute;left:193px;top:115px;width:97px;height:27px;box-sizing:border-box;border:1px solid #a9c0dc;border-radius:3px;background:linear-gradient(#e8eff8,#dde7f4 45%,#cfdcef 50%,#d6e2f2);"></div>
<div style="position:absolute;left:221px;top:117px;width:1px;height:23px;background:#cad8ea"></div>
<div style="position:absolute;left:251px;top:117px;width:1px;height:23px;background:#cad8ea"></div>
<div class="t" style="left:200px;top:116.72px;line-height:26px;font-size:21px;font-weight:bold;color:#111;font-family:'Liberation Serif', serif;">B</div>
<div class="t" style="left:230.5px;top:116.72px;line-height:26px;font-size:21px;font-weight:bold;color:#111;font-family:'Liberation Serif', serif;font-style:italic;">I</div>
<div class="t" style="left:257.5px;top:118.42px;line-height:24px;font-size:19px;font-weight:normal;color:#111;font-family:'Liberation Serif', serif;">U</div>
<div style="position:absolute;left:258px;top:138.5px;width:13px;height:1.2px;background:#333"></div>
<svg style="left:280px;top:126.5px" width="8" height="5"><polygon points="0,0 7,0 3.5,3.8" fill="#34588e"/></svg>
<div style="position:absolute;left:293px;top:115px;width:41px;height:27px;box-sizing:border-box;border:1px solid #a9c0dc;border-radius:3px;background:linear-gradient(#e8eff8,#dde7f4 45%,#cfdcef 50%,#d6e2f2);"></div>
<svg style="left:298px;top:120px" width="20" height="20" viewBox="0 0 20 20"><path d="M1,1 H19 V19 H1 Z M10,1 V19 M1,10 H19" fill="none" stroke="#6a6a6a" stroke-width="1.6" stroke-dasharray="1.6,1.1"/></svg>
<svg style="left:323.5px;top:126.5px" width="8" height="5"><polygon points="0,0 7,0 3.5,3.8" fill="#34588e"/></svg>
<div style="position:absolute;left:337px;top:115px;width:80px;height:27px;box-sizing:border-box;border:1px solid #a9c0dc;border-radius:3px;background:linear-gradient(#e8eff8,#dde7f4 45%,#cfdcef 50%,#d6e2f2);"></div>
<div style="position:absolute;left:376.5px;top:117px;width:1px;height:23px;background:#cad8ea"></div>
<svg style="left:0;top:0" width="430" height="150">
<defs><linearGradient id="bk" x1="0" y1="0" x2="1" y2="1"><stop offset="0" stop-color="#ffffff"/><stop offset="1" stop-color="#9fb8da"/></linearGradient></defs>
<path d="M348,120.5 C348,117.5 353.5,117.5 354,121" fill="none" stroke="#555" stroke-width="1.1"/>
<g transform="rotate(38 350.5 128.5)"><rect x="344" y="123.5" width="13" height="10" rx="1" fill="url(#bk)" stroke="#3d4450" stroke-width="1.1"/><ellipse cx="350.5" cy="123.5" rx="6.5" ry="1.8" fill="#e8eef6" stroke="#3d4450" stroke-width="0.9"/></g>
<path d="M355.5,124.5 C359.5,125 361,128 360.8,134" fill="none" stroke="#2e7ce0" stroke-width="2.6"/>
</svg>
<div style="position:absolute;left:340.5px;top:135px;width:22px;height:5px;background:#ffff00"></div>
<svg style="left:367px;top:126.5px" width="8" height="5"><polygon points="0,0 7,0 3.5,3.8" fill="#34588e"/></svg>
<div class="t" style="left:384.4px;top:115.89px;line-height:23px;font-size:18.5px;font-weight:normal;color:#1d3a70;font-family:'Liberation Serif', serif;-webkit-text-stroke:0.3px #1d3a70;">A</div>
<div style="position:absolute;left:380px;top:135px;width:22px;height:5px;background:#000"></div>
<svg style="left:406.5px;top:126.5px" width="8" height="5"><polygon points="0,0 7,0 3.5,3.8" fill="#34588e"/></svg>
<div style="position:absolute;left:427px;top:75px;width:85px;height:27px;box-sizing:border-box;border:1px solid #a9c0dc;border-radius:3px;background:linear-gradient(#e8eff8,#dde7f4 45%,#cfdcef 50%,#d6e2f2);"></div>
<div style="position:absolute;left:455px;top:77px;width:1px;height:23px;background:#cad8ea"></div>
<div style="position:absolute;left:483.5px;top:77px;width:1px;height:23px;background:#cad8ea"></div>
<div style="position:absolute;left:484px;top:76px;width:27px;height:25px;background:linear-gradient(#ffe3a6,#ffd07a 30%,#ffb54d 36%,#ffc25e 70%,#ffd690)"></div>
<svg style="left:0;top:0" width="768" height="180"><path d="M431.4,79.6 H450.6 M433,82.3 H449 M431.4,84.9 H450.6 M433,87.6 H449 " stroke="#454545" stroke-width="1.8"/></svg>
<svg style="left:0;top:0" width="768" height="180"><path d="M460,84.9 H479.2 M461.5,87.6 H477.7 M460,90.4 H479.2 M461.5,93.1 H477.7 " stroke="#454545" stroke-width="1.8"/></svg>
<svg style="left:0;top:0" width="768" height="180"><path d="M488.3,89 H507.6 M489.8,92 H506 M488.3,94.5 H507.6 M489.8,97.2 H506 " stroke="#3a2a18" stroke-width="1.8"/></svg>
<div style="position:absolute;left:515px;top:75px;width:38px;height:27px;box-sizing:border-box;border:1px solid #a9c0dc;border-radius:3px;background:linear-gradient(#e8eff8,#dde7f4 45%,#cfdcef 50%,#d6e2f2);"></div>
<svg style="left:518px;top:78px" width="22" height="22" viewBox="0 0 22 22">
<text x="1" y="15" font-family="Liberation Sans" font-size="13" fill="#3a3a3a" stroke="#3a3a3a" stroke-width="0.4" transform="rotate(-50 8 10)">ab</text>
<path d="M10,20 L20.5,8.5 M16.5,8.5 H20.5 V12.5" fill="none" stroke="#555" stroke-width="1.2"/>
</svg>
<svg style="left:541.5px;top:87px" width="8" height="5"><polygon points="0,0 7,0 3.5,3.8" fill="#34588e"/></svg>
<div style="position:absolute;left:427px;top:115px;width:85px;height:26px;box-sizing:border-box;border:1px solid #a9c0dc;border-radius:3px;background:linear-gradient(#e8eff8,#dde7f4 45%,#cfdcef 50%,#d6e2f2);"></div>
<div style="position:absolute;left:455px;top:117px;width:1px;height:22px;background:#cad8ea"></div>
<div style="position:absolute;left:483.5px;top:117px;width:1px;height:22px;background:#cad8ea"></div>
<svg style="left:0;top:0" width="768" height="180"><path d="M429.9,121.3 H450.4 M429.9,124.1 H446.5 M429.9,126.8 H450.4 M429.9,129.5 H446.5 M429.9,132.3 H450.4 M429.9,135 H446.5 " stroke="#505050" stroke-width="1.5"/></svg>
<svg style="left:0;top:0" width="768" height="180"><path d="M458.6,121.3 H478.7 M461.1,124.1 H476.2 M458.6,126.8 H478.7 M461.1,129.5 H476.2 M458.6,132.3 H478.7 M461.1,135 H476.2 " stroke="#505050" stroke-width="1.5"/></svg>
<svg style="left:0;top:0" width="768" height="180"><path d="M487.1,121.3 H507 M491,124.1 H507 M487.1,126.8 H507 M491,129.5 H507 M487.1,132.3 H507 M491,135 H507 " stroke="#505050" stroke-width="1.5"/></svg>
<div style="position:absolute;left:515px;top:115px;width:55px;height:26px;box-sizing:border-box;border:1px solid #a9c0dc;border-radius:3px;background:linear-gradient(#e8eff8,#dde7f4 45%,#cfdcef 50%,#d6e2f2);"></div>
<div style="position:absolute;left:543px;top:117px;width:1px;height:22px;background:#cad8ea"></div>
<svg style="left:0;top:0" width="768" height="180"><path d="M522.3,121.7 H525 M521.7,133 H525 M521.7,135 H525" stroke="#666" stroke-width="1.3"/><path d="M527.5,121.7 H538.3 M527.5,133 H538.3" stroke="#333" stroke-width="1.2"/><path d="M527.5,125.2 H538.3 M527.5,129.3 H534" stroke="#111" stroke-width="2.6"/><path d="M527,135 V136.5" stroke="#333" stroke-width="1"/><path d="M518.4,128 L524,124.8 V131.2 Z" fill="#3a7ad8"/></svg>
<svg style="left:0;top:0" width="768" height="180"><path d="M549.8,121.7 H552.5 M549.2,133 H552.5 M549.2,135 H552.5" stroke="#666" stroke-width="1.3"/><path d="M555.0,121.7 H565.8 M555.0,133 H565.8" stroke="#333" stroke-width="1.2"/><path d="M555.0,125.2 H565.8 M555.0,129.3 H561.5" stroke="#111" stroke-width="2.6"/><path d="M554.5,135 V136.5" stroke="#333" stroke-width="1"/><path d="M553,128 L547.4,124.8 V131.2 Z" fill="#3a7ad8"/></svg>
<div style="position:absolute;left:574px;top:70px;width:1px;height:76px;background:#a9bfdb"></div>
<div style="position:absolute;left:575px;top:70px;width:1px;height:76px;background:#f0f5fb"></div>
<svg style="left:580px;top:77px" width="24" height="22" viewBox="0 0 24 22">
<rect x="0.5" y="2.5" width="17" height="8" fill="#f0f3f7" stroke="#707a88"/>
<rect x="0.5" y="12.5" width="17" height="8" fill="#f0f3f7" stroke="#707a88"/>
<path d="M3,5.5 H22 M3,8 H14 M3,15 H14 M3,18 H14" stroke="#c89a50" stroke-width="1.4"/>
<path d="M19,10 V15 H15" fill="none" stroke="#333" stroke-width="1.4"/><path d="M14,15 L17,12.5 V17.5 Z" fill="#333"/>
</svg>
<div class="t" style="left:606.6px;top:80.75px;line-height:18px;font-size:14px;font-weight:normal;color:#15428b;font-family:'Liberation Sans', sans-serif;">Wrap Text</div>
<svg style="left:580px;top:119px" width="24" height="20" viewBox="0 0 24 20">
<rect x="0.5" y="0.5" width="21" height="18" fill="#fff" stroke="#6c7a90"/>
<path d="M0.5,4.5 H21.5 M0.5,14.5 H21.5" stroke="#6c7a90"/>
<path d="M1,2.5 H21 M1,16.5 H21" stroke="#c6d6ee" stroke-width="2"/>
<path d="M2,9.5 H6 M16,9.5 H20" stroke="#222" stroke-width="1.2"/>
<path d="M2,9.5 L4,8 V11 Z M20,9.5 L18,8 V11 Z" fill="#222"/>
<text x="7" y="13.5" font-family="Liberation Serif" font-size="13" fill="#111">a</text>
</svg>
<div class="t" style="left:606.6px;top:119.85px;line-height:18px;font-size:14px;font-weight:normal;color:#15428b;font-family:'Liberation Sans', sans-serif;">Merge &amp; Center</div>
<svg style="left:713px;top:126.5px" width="8" height="5"><polygon points="0,0 7,0 3.5,3.8" fill="#34588e"/></svg>
<div style="position:absolute;left:733px;top:74px;width:60px;height:30px;box-sizing:border-box;border:1px solid #b9cde6;background:#eef3fa"></div>
<div class="t" style="left:736.3px;top:77.85px;line-height:18px;font-size:14px;font-weight:normal;color:#222;font-family:'Liberation Sans', sans-serif;">General</div>
<div style="position:absolute;left:733px;top:115px;width:67px;height:27px;box-sizing:border-box;border:1px solid #a9c0dc;border-radius:3px;background:linear-gradient(#e8eff8,#dde7f4 45%,#cfdcef 50%,#d6e2f2);"></div>
<svg style="left:736px;top:117px" width="24" height="24" viewBox="0 0 24 24">
<rect x="0.5" y="1" width="22" height="12" fill="#4a78c8" stroke="#2c4f90"/>
<ellipse cx="11.5" cy="7" rx="6" ry="3.5" fill="#9fc3f0"/>
<ellipse cx="6" cy="17" rx="4" ry="1.8" fill="#e8b040" stroke="#a07020" stroke-width="0.6"/>
<ellipse cx="15" cy="14" rx="4" ry="1.8" fill="#e8b040" stroke="#a07020" stroke-width="0.6"/>
<ellipse cx="15" cy="17.5" rx="4" ry="1.8" fill="#e8b040" stroke="#a07020" stroke-width="0.6"/>
<ellipse cx="14" cy="21" rx="4" ry="1.8" fill="#e8b040" stroke="#a07020" stroke-width="0.6"/>
</svg>
<svg style="left:763px;top:126.5px" width="8" height="5"><polygon points="0,0 7,0 3.5,3.8" fill="#34588e"/></svg>
<svg style="left:65px;top:0px" width="22" height="21" viewBox="0 0 22 21">
<rect x="0.5" y="-1" width="21" height="21" rx="1" fill="#6b6fd0" stroke="#3c3f90"/>
<rect x="3" y="0" width="15" height="8" fill="#f4f6fb"/>
<rect x="5" y="12" width="11" height="8" fill="#e6e9f2"/>
<rect x="7" y="13.5" width="2" height="5" fill="#5b62b8"/>
</svg>
<svg style="left:95px;top:3px" width="18" height="17" viewBox="0 0 18 17">
<path d="M4,6 C7,1 14,1 15,7 C16,11 13,14 11,16" fill="none" stroke="#3d7fd6" stroke-width="3.2"/>
<path d="M0,3 L7,2.5 L3.5,9.5 Z" fill="#3d7fd6"/>
</svg>
<svg style="left:118px;top:9px" width="9" height="6"><polygon points="0,0 8,0 4,4.5" fill="#1d3f7a"/></svg>
<svg style="left:134px;top:3px" width="18" height="17" viewBox="0 0 18 17">
<path d="M14,6 C11,1 4,1 3,7 C2,11 5,14 7,16" fill="none" stroke="#a9bfcc" stroke-width="3.2"/>
<path d="M18,3 L11,2.5 L14.5,9.5 Z" fill="#a9bfcc"/>
</svg>
<svg style="left:156px;top:9px" width="9" height="6"><polygon points="0,0 8,0 4,4.5" fill="#b2a99a"/></svg>
<svg style="left:173px;top:0px" width="17" height="21" viewBox="0 0 17 21">
<defs><linearGradient id="nd" x1="0" y1="0" x2="1" y2="1"><stop offset="0" stop-color="#ffffff"/><stop offset="0.6" stop-color="#f4f8ff"/><stop offset="1" stop-color="#9ab8e8"/></linearGradient></defs>
<path d="M0.5,0.5 H11 L15.5,5 V19.5 H0.5 Z" fill="url(#nd)" stroke="#7a8ca8"/>
<path d="M11,0.5 V5 H15.5" fill="#dde6f2" stroke="#7a8ca8"/>
</svg>
<svg style="left:0;top:0" width="230" height="27">
<path d="M210,8 H219" stroke="#1d3f8a" stroke-width="1.8"/><path d="M210,9.8 H219" stroke="#dfe8f0" stroke-width="1.2"/>
<path d="M210,12.6 H219" stroke="#1d3f8a" stroke-width="1.5"/>
<path d="M211,13.8 L214.5,17.6 L218,13.8" fill="none" stroke="#e8f0f8" stroke-width="1.4"/>
</svg>
<svg style="left:2px;top:1px" width="52" height="52" viewBox="0 0 52 52">
<defs><radialGradient id="ob" cx="0.5" cy="0.5" r="0.5"><stop offset="0" stop-color="#ffffff"/><stop offset="0.75" stop-color="#eef2f6"/><stop offset="1" stop-color="#d2dbe4"/></radialGradient>
<linearGradient id="ob2" x1="0" y1="0" x2="0" y2="1"><stop offset="0" stop-color="#fff" stop-opacity="0.9"/><stop offset="0.45" stop-color="#e6ecf2" stop-opacity="0.6"/><stop offset="0.5" stop-color="#b9c6d4" stop-opacity="0.7"/><stop offset="1" stop-color="#fff" stop-opacity="0.9"/></linearGradient></defs>
<circle cx="25.7" cy="25" r="24.3" fill="url(#ob)" stroke="#9aa5b4" stroke-width="1"/>
<circle cx="25.7" cy="25" r="22" fill="url(#ob2)"/>
<path d="M11.1,9.2 H27.2 V24.9 H11.1 Z M14.4,13.2 V20.6 H22.6 V13.2 Z" fill="#f08a24" fill-rule="evenodd"/>
<path d="M11.1,9.2 H20 L11.1,18 Z" fill="#dc5a28"/>
<rect x="23.5" y="21.5" width="2.5" height="2.5" fill="#fff" opacity="0.7"/>
<path d="M28.3,14.7 H38.8 V24.9 H28.3 Z M31.2,17.2 V22 H36.4 V17.2 Z" fill="#3f8fe0" fill-rule="evenodd"/>
<rect x="29.5" y="21.5" width="2" height="2" fill="#1f5fb8"/>
<path d="M13,26.7 H26.8 V41.3 H13 Z M16.6,29.8 V37.7 H23.9 V29.8 Z" fill="#f5b623" fill-rule="evenodd"/>
<path d="M27.9,26.7 H40.3 V39.1 H27.9 Z M31.5,30.2 V35.6 H36.8 V30.2 Z" fill="#59a83c" fill-rule="evenodd"/>
<path d="M27.9,26.7 H34 L27.9,33 Z" fill="#92cc78"/>
</svg>
</body></html>
